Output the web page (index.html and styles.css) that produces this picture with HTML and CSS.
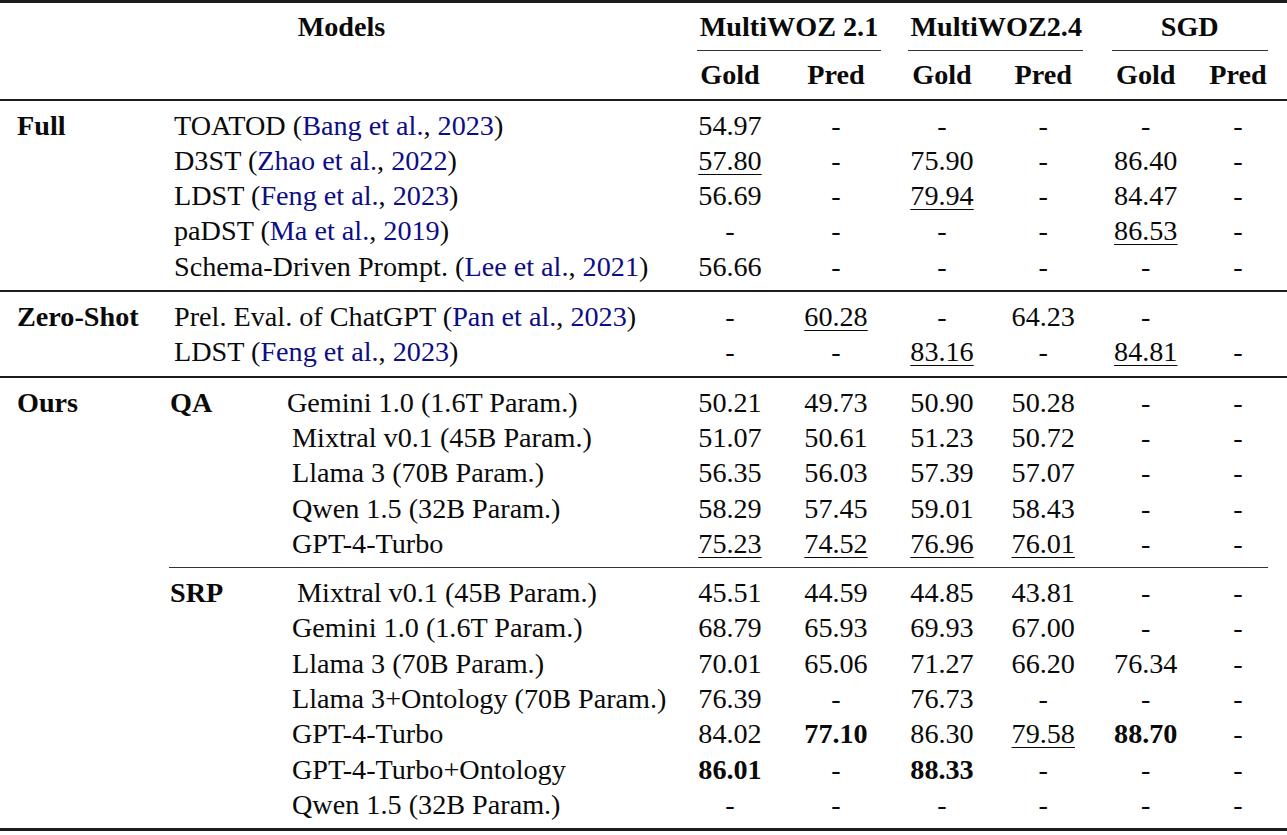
FILE: index.html
```html
<!DOCTYPE html>
<html lang="en">
<head>
<meta charset="utf-8">
<title>Results table</title>
<link rel="stylesheet" href="styles.css">
</head>
<body>
<table class="results">
  <colgroup>
    <col class="c-cat"><col class="c-sub"><col class="c-model">
    <col class="c-g1"><col class="c-p1"><col class="c-g2"><col class="c-p2"><col class="c-g3"><col class="c-p3">
  </colgroup>
  <thead>
    <tr class="rule-row"><td colspan="9"><div class="rule top"></div></td></tr>
    <tr class="head">
      <th colspan="3" class="models">Models</th>
      <th colspan="2">MultiWOZ 2.1</th>
      <th colspan="2">MultiWOZ2.4</th>
      <th colspan="2" class="last">SGD</th>
    </tr>
    <tr class="cmid-row">
      <td colspan="3"></td>
      <td colspan="2"><div class="cmid cm1"></div></td>
      <td colspan="2"><div class="cmid cm2"></div></td>
      <td colspan="2"><div class="cmid cm3"></div></td>
    </tr>
    <tr class="head">
      <th colspan="3"></th>
      <th>Gold</th><th>Pred</th><th>Gold</th><th>Pred</th><th>Gold</th><th class="last">Pred</th>
    </tr>
    <tr class="rule-row"><td colspan="9"><div class="rule mid"></div></td></tr>
  </thead>
  <tbody>
    <tr>
      <td class="cat">Full</td>
      <td colspan="2" class="ref">TOATOD (<span class="cite">Bang et al.</span>, <span class="cite">2023</span>)</td>
      <td class="num">54.97</td><td class="num">-</td><td class="num">-</td><td class="num">-</td><td class="num">-</td><td class="num last">-</td>
    </tr>
    <tr>
      <td class="cat"></td>
      <td colspan="2" class="ref">D3ST (<span class="cite">Zhao et al.</span>, <span class="cite">2022</span>)</td>
      <td class="num"><span class="ul">57.80</span></td><td class="num">-</td><td class="num">75.90</td><td class="num">-</td><td class="num">86.40</td><td class="num last">-</td>
    </tr>
    <tr>
      <td class="cat"></td>
      <td colspan="2" class="ref">LDST (<span class="cite">Feng et al.</span>, <span class="cite">2023</span>)</td>
      <td class="num">56.69</td><td class="num">-</td><td class="num"><span class="ul">79.94</span></td><td class="num">-</td><td class="num">84.47</td><td class="num last">-</td>
    </tr>
    <tr>
      <td class="cat"></td>
      <td colspan="2" class="ref">paDST (<span class="cite">Ma et al.</span>, <span class="cite">2019</span>)</td>
      <td class="num">-</td><td class="num">-</td><td class="num">-</td><td class="num">-</td><td class="num"><span class="ul">86.53</span></td><td class="num last">-</td>
    </tr>
    <tr>
      <td class="cat"></td>
      <td colspan="2" class="ref">Schema-Driven Prompt. (<span class="cite">Lee et al.</span>, <span class="cite">2021</span>)</td>
      <td class="num">56.66</td><td class="num">-</td><td class="num">-</td><td class="num">-</td><td class="num">-</td><td class="num last">-</td>
    </tr>
    <tr class="rule-row"><td colspan="9"><div class="rule mid"></div></td></tr>
  </tbody>
  <tbody>
    <tr>
      <td class="cat">Zero-Shot</td>
      <td colspan="2" class="ref">Prel. Eval. of ChatGPT (<span class="cite">Pan et al.</span>, <span class="cite">2023</span>)</td>
      <td class="num">-</td><td class="num"><span class="ul">60.28</span></td><td class="num">-</td><td class="num">64.23</td><td class="num">-</td><td class="num last"></td>
    </tr>
    <tr>
      <td class="cat"></td>
      <td colspan="2" class="ref">LDST (<span class="cite">Feng et al.</span>, <span class="cite">2023</span>)</td>
      <td class="num">-</td><td class="num">-</td><td class="num"><span class="ul">83.16</span></td><td class="num">-</td><td class="num"><span class="ul">84.81</span></td><td class="num last">-</td>
    </tr>
    <tr class="rule-row"><td colspan="9"><div class="rule mid"></div></td></tr>
  </tbody>
  <tbody>
    <tr>
      <td class="cat">Ours</td><td class="sub">QA</td>
      <td class="model shift-l">Gemini 1.0 (1.6T Param.)</td>
      <td class="num">50.21</td><td class="num">49.73</td><td class="num">50.90</td><td class="num">50.28</td><td class="num">-</td><td class="num last">-</td>
    </tr>
    <tr>
      <td class="cat"></td><td class="sub"></td>
      <td class="model">Mixtral v0.1 (45B Param.)</td>
      <td class="num">51.07</td><td class="num">50.61</td><td class="num">51.23</td><td class="num">50.72</td><td class="num">-</td><td class="num last">-</td>
    </tr>
    <tr>
      <td class="cat"></td><td class="sub"></td>
      <td class="model">Llama 3 (70B Param.)</td>
      <td class="num">56.35</td><td class="num">56.03</td><td class="num">57.39</td><td class="num">57.07</td><td class="num">-</td><td class="num last">-</td>
    </tr>
    <tr>
      <td class="cat"></td><td class="sub"></td>
      <td class="model">Qwen 1.5 (32B Param.)</td>
      <td class="num">58.29</td><td class="num">57.45</td><td class="num">59.01</td><td class="num">58.43</td><td class="num">-</td><td class="num last">-</td>
    </tr>
    <tr>
      <td class="cat"></td><td class="sub"></td>
      <td class="model">GPT-4-Turbo</td>
      <td class="num"><span class="ul">75.23</span></td><td class="num"><span class="ul">74.52</span></td><td class="num"><span class="ul">76.96</span></td><td class="num"><span class="ul">76.01</span></td><td class="num">-</td><td class="num last">-</td>
    </tr>
    <tr class="cmid-row">
      <td></td>
      <td colspan="8"><div class="cmid cm-ours"></div></td>
    </tr>
    <tr>
      <td class="cat"></td><td class="sub">SRP</td>
      <td class="model shift-r">Mixtral v0.1 (45B Param.)</td>
      <td class="num">45.51</td><td class="num">44.59</td><td class="num">44.85</td><td class="num">43.81</td><td class="num">-</td><td class="num last">-</td>
    </tr>
    <tr>
      <td class="cat"></td><td class="sub"></td>
      <td class="model">Gemini 1.0 (1.6T Param.)</td>
      <td class="num">68.79</td><td class="num">65.93</td><td class="num">69.93</td><td class="num">67.00</td><td class="num">-</td><td class="num last">-</td>
    </tr>
    <tr>
      <td class="cat"></td><td class="sub"></td>
      <td class="model">Llama 3 (70B Param.)</td>
      <td class="num">70.01</td><td class="num">65.06</td><td class="num">71.27</td><td class="num">66.20</td><td class="num">76.34</td><td class="num last">-</td>
    </tr>
    <tr>
      <td class="cat"></td><td class="sub"></td>
      <td class="model">Llama 3+Ontology (70B Param.)</td>
      <td class="num">76.39</td><td class="num">-</td><td class="num">76.73</td><td class="num">-</td><td class="num">-</td><td class="num last">-</td>
    </tr>
    <tr>
      <td class="cat"></td><td class="sub"></td>
      <td class="model">GPT-4-Turbo</td>
      <td class="num">84.02</td><td class="num"><b>77.10</b></td><td class="num">86.30</td><td class="num"><span class="ul">79.58</span></td><td class="num"><b>88.70</b></td><td class="num last">-</td>
    </tr>
    <tr>
      <td class="cat"></td><td class="sub"></td>
      <td class="model">GPT-4-Turbo+Ontology</td>
      <td class="num"><b>86.01</b></td><td class="num">-</td><td class="num"><b>88.33</b></td><td class="num">-</td><td class="num">-</td><td class="num last">-</td>
    </tr>
    <tr>
      <td class="cat"></td><td class="sub"></td>
      <td class="model">Qwen 1.5 (32B Param.)</td>
      <td class="num">-</td><td class="num">-</td><td class="num">-</td><td class="num">-</td><td class="num">-</td><td class="num last">-</td>
    </tr>
    <tr class="rule-row"><td colspan="9"><div class="rule bottom"></div></td></tr>
  </tbody>
</table>
</body>
</html>
```

FILE: styles.css
```css
html, body {
  margin: 0;
  padding: 0;
  background: #ffffff;
}

body {
  font-family: "Liberation Serif", "Times New Roman", serif;
  color: #0a0a0a;
}

.results {
  width: 1287px;
  border-collapse: collapse;
  table-layout: fixed;
  font-size: 28.2px;
  line-height: 35.3px;
}

.c-cat { width: 155px; }
.c-sub { width: 120px; }
.c-model { width: 408px; }
.c-g1 { width: 94px; }
.c-p1 { width: 118px; }
.c-g2 { width: 94px; }
.c-p2 { width: 108.5px; }
.c-g3 { width: 96.5px; }
.c-p3 { width: 93px; }

.results th,
.results td {
  padding: 0;
  white-space: nowrap;
  vertical-align: baseline;
}

.results th {
  font-weight: bold;
  text-align: center;
}

.results th.models {
  text-align: center;
}

.results .last {
  padding-right: 5px;
}

/* rules (booktabs style) */
.rule-row td,
.cmid-row td {
  padding: 0;
  line-height: 0;
  font-size: 0;
}

.rule {
  background: #1c1c1c;
}

.rule.top {
  height: 3px;
  margin-bottom: 6px;
}

.rule.mid {
  height: 2px;
  margin-top: 6px;
  margin-bottom: 7px;
}

.rule.bottom {
  height: 3px;
  margin-top: 6px;
}

.cmid {
  height: 1px;
  background: #333333;
  margin-top: 6px;
  margin-bottom: 6px;
}

.cm1 { margin-left: 14px; margin-right: 14px; }
.cm2 { margin-left: 13px; margin-right: 14.5px; }
.cm3 { margin-left: 14px; margin-right: 19px; }
.cm-ours { margin-left: 14px; margin-right: 19px; margin-bottom: 7px; }

/* body cells */
.cat {
  font-weight: bold;
  padding-left: 17px !important;
}

.sub {
  font-weight: bold;
  padding-left: 15px !important;
}

.ref {
  padding-left: 19px !important;
}

.model {
  padding-left: 17px !important;
}

.model.shift-l {
  padding-left: 12px !important;
}

.model.shift-r {
  padding-left: 22px !important;
}

.num {
  text-align: center;
}

.cite {
  color: #0d0d86;
}

.ul {
  text-decoration: underline;
  text-decoration-thickness: 1px;
  text-underline-offset: 4px;
}

.num b {
  font-weight: bold;
}
```
